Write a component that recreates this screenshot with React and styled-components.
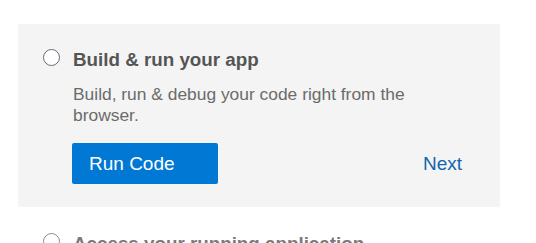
import React from 'react';
import styled, { createGlobalStyle } from 'styled-components';

const GlobalStyle = createGlobalStyle`
  html, body {
    margin: 0;
    padding: 0;
    background: #ffffff;
  }
  body {
    font-family: "Liberation Sans", Arial, sans-serif;
    overflow: hidden;
  }
`;

const Page = styled.div`
  width: 482px;
  padding: 24px 36px 0 18px;
  display: flex;
  flex-direction: column;
  gap: 1px;
`;

const Step = styled.div`
  display: flex;
  gap: 13px;
  padding: 25px 24px 23px 25px;
  border-radius: 2px;
  background: ${p => (p.$active ? '#f4f4f4' : 'transparent')};
`;

const Radio = styled.div`
  flex: 0 0 auto;
  width: 15px;
  height: 15px;
  margin-top: 0;
  border-radius: 50%;
  border: 1px solid ${p => (p.$active ? '#666a78' : '#8a8a8a')};
  background: #ffffff;
`;

const Body = styled.div`
  flex: 1;
  display: flex;
  flex-direction: column;
`;

const Title = styled.div`
  font-size: 18.8px;
  line-height: 22px;
  font-weight: bold;
  color: ${p => (p.$active ? '#555555' : '#7a7a7a')};
`;

const Description = styled.p`
  margin: 13px 0 0;
  max-width: 370px;
  font-size: 17.4px;
  line-height: 21px;
  color: #6b6b6b;
`;

const Actions = styled.div`
  margin-top: 17px;
  display: flex;
  align-items: center;
  justify-content: space-between;
`;

const PrimaryButton = styled.button`
  width: 146px;
  height: 41px;
  margin-left: -1px;
  padding: 0 17px;
  display: flex;
  align-items: center;
  border: none;
  border-radius: 2px;
  background: #0078d4;
  color: #ffffff;
  font-family: inherit;
  font-size: 19px;
  line-height: 22px;
  cursor: pointer;
`;

const NextLink = styled.a`
  margin-right: 14px;
  font-size: 19px;
  line-height: 22px;
  color: #1464b0;
  text-decoration: none;
  cursor: pointer;
`;

export default function App() {
  return (
    <>
      <GlobalStyle />
      <Page>
        <Step $active>
          <Radio $active />
          <Body>
            <Title $active>Build &amp; run your app</Title>
            <Description>
              Build, run &amp; debug your code right from the browser.
            </Description>
            <Actions>
              <PrimaryButton>Run Code</PrimaryButton>
              <NextLink>Next</NextLink>
            </Actions>
          </Body>
        </Step>
        <Step>
          <Radio />
          <Body>
            <Title>Access your running application</Title>
          </Body>
        </Step>
      </Page>
    </>
  );
}
